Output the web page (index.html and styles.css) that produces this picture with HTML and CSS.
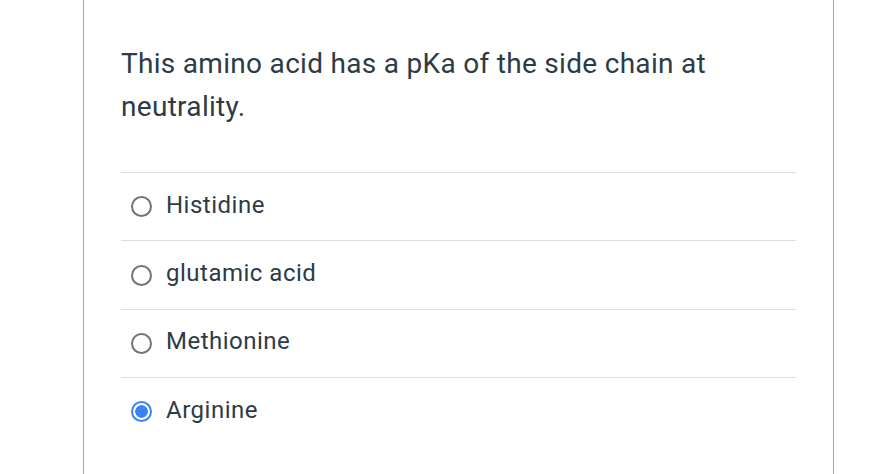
FILE: index.html
```html
<!DOCTYPE html>
<html>
<head>
<meta charset="utf-8">
<link rel="stylesheet" href="styles.css">
</head>
<body>
<div class="page">
  <div class="card">
    <p class="question">This amino acid has a pKa of the side chain at neutrality.</p>
    <div class="options">
      <label class="option"><span class="radio"></span><span class="label">Histidine</span></label>
      <label class="option"><span class="radio"></span><span class="label">glutamic acid</span></label>
      <label class="option"><span class="radio"></span><span class="label">Methionine</span></label>
      <label class="option"><span class="radio checked"></span><span class="label">Arginine</span></label>
    </div>
  </div>
</div>
</body>
</html>
```
FILE: styles.css
```css
html, body {
  margin: 0;
  padding: 0;
  background: #ffffff;
}
.page {
  height: 474px;
  overflow: hidden;
  padding-left: 83px;
}
.card {
  width: 675px;
  height: 474px;
  border-left: 1px solid #a6a6a6;
  border-right: 1px solid #a6a6a6;
  padding: 0 37px;
  font-family: Roboto, "Liberation Sans", sans-serif;
  color: #2d3b45;
}
.question {
  margin: 0;
  padding-top: 42px;
  font-size: 28px;
  letter-spacing: 0.3px;
  line-height: 43px;
  width: 620px;
  padding-bottom: 44px;
}
.options {
  display: flex;
  flex-direction: column;
}
.option {
  display: flex;
  align-items: center;
  height: 67.4px;
  border-top: 1px solid #dddddd;
  gap: 14px;
  padding-left: 10px;
}
.radio {
  box-sizing: border-box;
  width: 21px;
  height: 21px;
  border-radius: 50%;
  border: 2px solid #737373;
  background: #fff;
}
.radio.checked {
  border-color: #3b82f6;
  background: radial-gradient(circle, #3b82f6 0 6px, #fff 6.5px);
}
.label {
  font-size: 24px;
  letter-spacing: 0.5px;
  line-height: 28px;
  padding-bottom: 4px;
}
```
